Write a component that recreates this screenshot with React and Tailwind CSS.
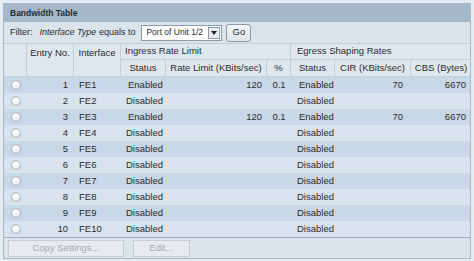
import React from "react";

const rows = [
  { n: 1, fe: "FE1", st: "Enabled", rl: "120", pct: "0.1", est: "Enabled", cir: "70", cbs: "6670" },
  { n: 2, fe: "FE2", st: "Disabled", est: "Disabled" },
  { n: 3, fe: "FE3", st: "Enabled", rl: "120", pct: "0.1", est: "Enabled", cir: "70", cbs: "6670" },
  { n: 4, fe: "FE4", st: "Disabled", est: "Disabled" },
  { n: 5, fe: "FE5", st: "Disabled", est: "Disabled" },
  { n: 6, fe: "FE6", st: "Disabled", est: "Disabled" },
  { n: 7, fe: "FE7", st: "Disabled", est: "Disabled" },
  { n: 8, fe: "FE8", st: "Disabled", est: "Disabled" },
  { n: 9, fe: "FE9", st: "Disabled", est: "Disabled" },
  { n: 10, fe: "FE10", st: "Disabled", est: "Disabled" },
];

const cols = "grid grid-cols-[23px_47px_47px_45px_101px_24px_44px_76px_60px]";

const Radio = () => (
  <span className="block w-[10px] h-[10px] rounded-full border border-[#a9b3bc] bg-[radial-gradient(circle_at_40%_35%,#ffffff,#dfe4e8)]" />
);

export default function App() {
  return (
    <div className="w-[474px] h-[261px] bg-[#e4ebf1] pt-[3px] px-[3px] font-['Liberation_Sans',Arial,sans-serif] text-[9.5px] text-[#2b2b2b] whitespace-nowrap">
      <div className="h-[256px] border border-[#a8b8c7] bg-[#dce4eb] flex flex-col">
        {/* ===== title ===== */}
        <div className="h-[18px] bg-[#a5b8c9] flex items-center pl-[6px] font-bold text-[8.5px] text-[#1f2a33]">
          Bandwidth Table
        </div>

        {/* ===== filter ===== */}
        <div className="h-[22px] flex items-center pl-[6px] gap-[4px] border-b border-[#c3ced8] text-[9px]">
          <span>Filter:</span>
          <span className="ml-[3px]">
            <i>Interface Type</i> equals to
          </span>
          <div className="ml-[2px] w-[81px] h-[16px] bg-white border border-[#8c9ba8] flex items-center pl-[4px] text-[8.5px]">
            <span className="flex-1">Port of Unit 1/2</span>
            <span className="w-[12px] h-[12px] mr-[1px] border border-[#8c9ba8] bg-[#e9edf0] flex items-center justify-center">
              <svg width="6" height="4" viewBox="0 0 6 4">
                <path d="M0 0h6L3 4z" fill="#222" />
              </svg>
            </span>
          </div>
          <div className="w-[25px] h-[18px] rounded-[3px] border border-[#8d9ba8] bg-[linear-gradient(#f4f6f8,#dfe5ea)] flex items-center justify-center text-[9.5px]">
            Go
          </div>
        </div>

        {/* ===== header ===== */}
        <div className={`${cols} grid-rows-[16px_16px] bg-[#dfe7ee] border-b border-[#c3ced8]`}>
          <div className="row-span-2 border-r border-[#c3ced8]" />
          <div className="row-span-2 border-r border-[#c3ced8] text-center pt-[2px]">Entry No.</div>
          <div className="row-span-2 border-r border-[#c3ced8] text-center pt-[2px]">Interface</div>
          <div className="col-span-3 border-r border-b border-[#c3ced8] pl-[4px] flex items-center">Ingress Rate Limit</div>
          <div className="col-span-3 border-b border-[#c3ced8] pl-[6px] flex items-center">Egress Shaping Rates</div>
          <div className="border-r border-[#c3ced8] flex items-center justify-center">Status</div>
          <div className="border-r border-[#c3ced8] flex items-center justify-center">Rate Limit (KBits/sec)</div>
          <div className="border-r border-[#c3ced8] flex items-center justify-center">%</div>
          <div className="border-r border-[#c3ced8] flex items-center justify-center">Status</div>
          <div className="border-r border-[#c3ced8] flex items-center justify-center">CIR (KBits/sec)</div>
          <div className="flex items-center justify-center">CBS (Bytes)</div>
        </div>

        {/* ===== rows ===== */}
        <div>
          {rows.map((r) => (
            <div
              key={r.n}
              className={`${cols} h-[16px] items-center ${r.n % 2 ? "bg-[#c8d8e9]" : "bg-[#d8e3ee]"}`}
            >
              <div className="flex justify-center">
                <Radio />
              </div>
              <div className="text-right pr-[6px]">{r.n}</div>
              <div className="pl-[5px]">{r.fe}</div>
              <div className={r.st === "Enabled" ? "pl-[7px]" : "pl-[5px]"}>{r.st}</div>
              <div className="text-right pr-[5px]">{r.rl}</div>
              <div className="text-center">{r.pct}</div>
              <div className={r.est === "Enabled" ? "pl-[8px]" : "pl-[6px]"}>{r.est}</div>
              <div className="text-right pr-[8px]">{r.cir}</div>
              <div className="text-right pr-[5px]">{r.cbs}</div>
            </div>
          ))}
        </div>

        {/* ===== buttons ===== */}
        <div className="flex-1 border-t border-[#9eadb9] flex items-center gap-[9px] pl-[4px]">
          <div className="w-[116px] h-[17px] border border-[#c6ced5] bg-[#e7ebee] text-[#a3a9ae] flex items-center justify-center">
            Copy Settings...
          </div>
          <div className="w-[57px] h-[17px] border border-[#c6ced5] bg-[#e7ebee] text-[#a3a9ae] flex items-center justify-center">
            Edit...
          </div>
        </div>
      </div>
    </div>
  );
}
